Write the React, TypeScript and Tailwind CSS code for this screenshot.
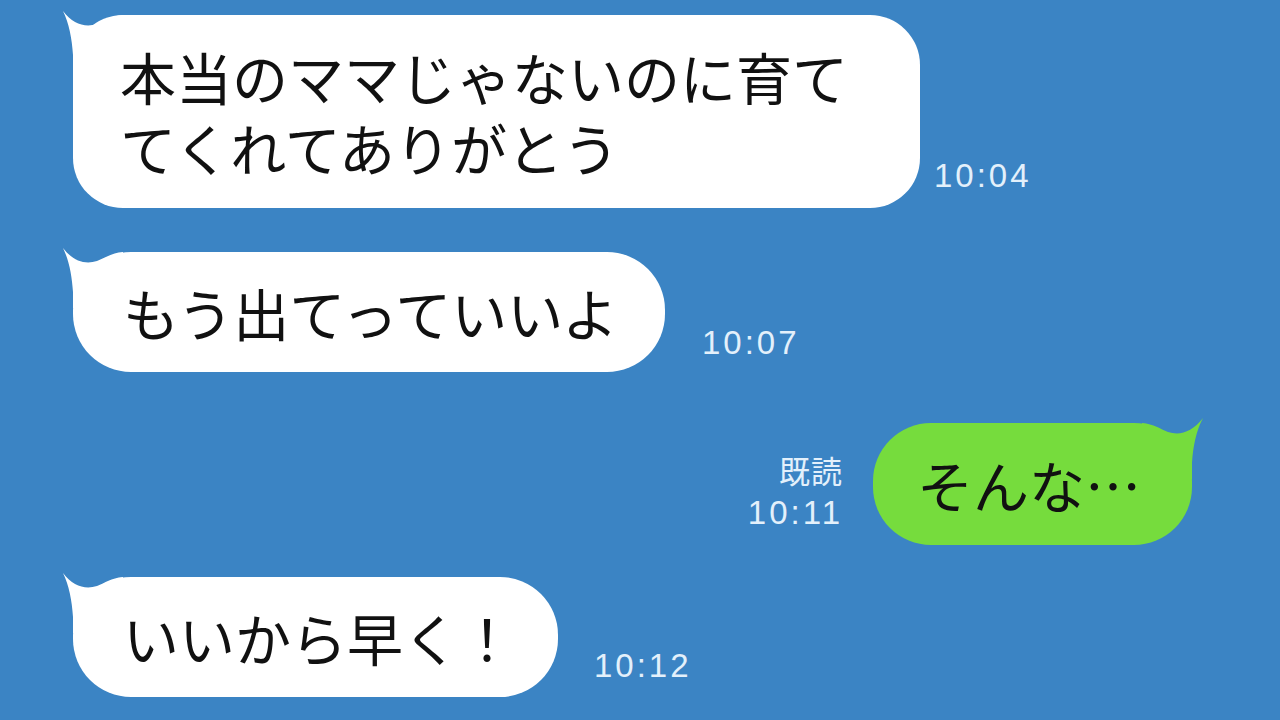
const jp = "font-['Noto_Sans_CJK_JP',sans-serif]";
const time = "font-['Liberation_Sans',Arial,sans-serif] text-[33px] leading-none tracking-[3px] text-[#e3f0fb]";

function LeftTail() {
  return (
    <svg
      className="absolute left-[-12px] top-[-6px] h-[70px] w-[70px]"
      viewBox="0 0 70 70"
    >
      <path
        d="M2 2 C12 15 24 19 36 15 C44 12 50 7 62 6 L62 62 L12 62 L12 46 C11 30 8 14 2 2 Z"
        fill="#ffffff"
      />
    </svg>
  );
}

function RightTail() {
  return (
    <svg
      className="absolute right-[-12px] top-[-6px] h-[70px] w-[70px] -scale-x-100"
      viewBox="0 0 70 70"
    >
      <path
        d="M1 1 C12 15 24 19 36 15 C44 12 50 7 62 6 L62 62 L12 62 L12 46 C11 30 8 14 1 1 Z"
        fill="#76dc3d"
      />
    </svg>
  );
}

export default function App() {
  return (
    <div className="flex h-[720px] w-[1280px] flex-col overflow-hidden bg-[#3b84c4]">
      {/* 1 */}
      <div className="ml-[73px] mt-[15px] flex items-end">
        <div
          className={`relative h-[193px] w-[847px] rounded-[50px] bg-white pl-[47px] pt-[25px] text-[56px] leading-[71px] text-[#111] ${jp}`}
        >
          <LeftTail />
          <p className="relative">
            本当のママじゃないのに育て
            <br />
            てくれてありがとう
          </p>
        </div>
        <div className={`mb-[16px] ml-[14px] ${time}`}>10:04</div>
      </div>

      {/* 2 */}
      <div className="ml-[73px] mt-[44px] flex items-end">
        <div
          className={`relative flex h-[120px] w-[592px] items-center rounded-[58px] bg-white pl-[50px] text-[56px] text-[#111] ${jp}`}
        >
          <LeftTail />
          <span className="relative">もう出てっていいよ</span>
        </div>
        <div className={`mb-[13px] ml-[37px] ${time}`}>10:07</div>
      </div>

      {/* 3 */}
      <div className="mr-[88px] mt-[51px] flex items-end justify-end">
        <div className="mb-[16px] mr-[30px] flex flex-col items-end">
          <div className={`mb-[11px] text-[31px] leading-none tracking-[1px] text-[#e3f0fb] ${jp}`}>既読</div>
          <div className={time}>10:11</div>
        </div>
        <div
          className={`relative flex h-[122px] w-[319px] items-center rounded-[58px] bg-[#76dc3d] pl-[44px] text-[56px] text-[#111] ${jp}`}
        >
          <RightTail />
          <span className="relative">そんな…</span>
        </div>
      </div>

      {/* 4 */}
      <div className="ml-[73px] mt-[32px] flex items-end">
        <div
          className={`relative flex h-[120px] w-[485px] items-center rounded-[58px] bg-white pl-[50px] text-[56px] text-[#111] ${jp}`}
        >
          <LeftTail />
          <span className="relative">いいから早く！</span>
        </div>
        <div className={`mb-[15px] ml-[36px] ${time}`}>10:12</div>
      </div>
    </div>
  );
}
